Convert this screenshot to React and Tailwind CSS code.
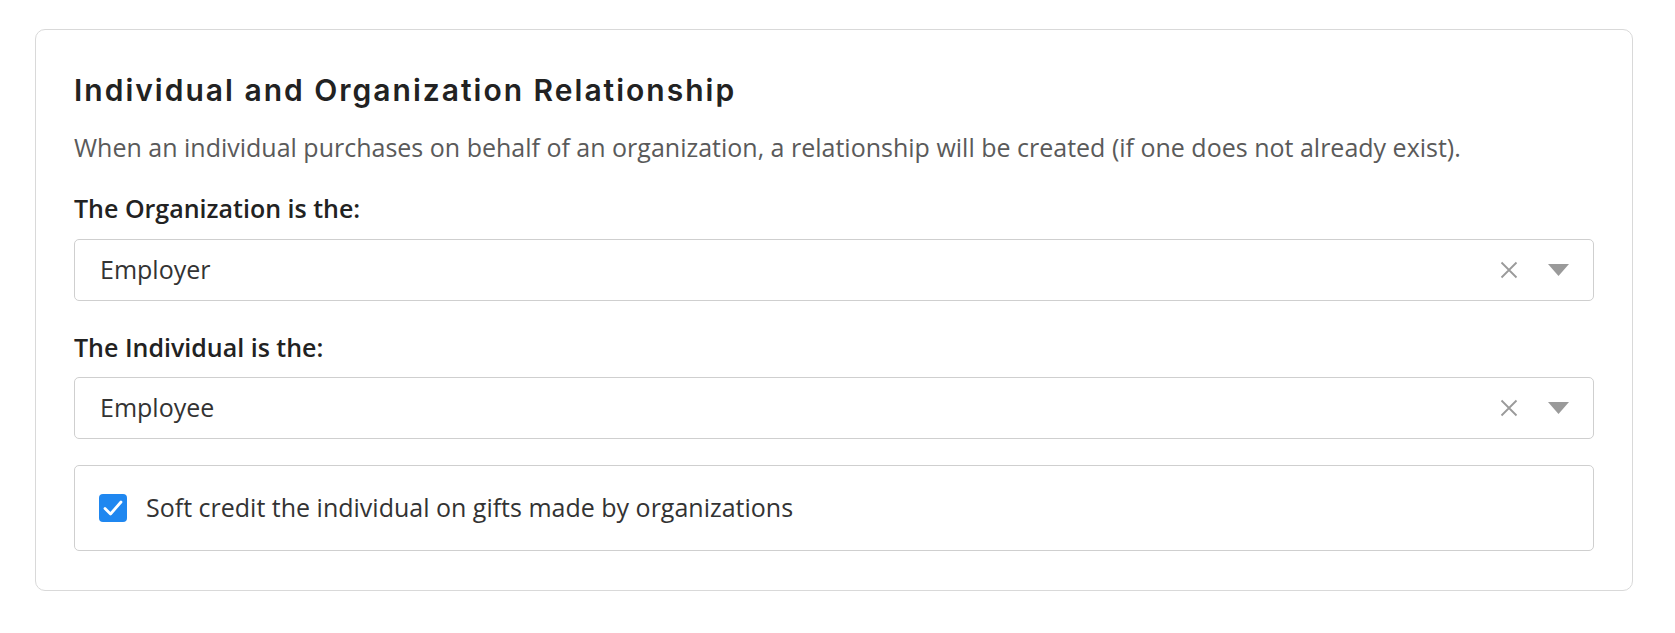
const body = { fontFamily: '"Open Sans", "Noto Sans", sans-serif' };
const heading = { fontFamily: 'Inter, "Noto Sans", sans-serif' };

function ClearIcon() {
  return (
    <svg width="18" height="18" viewBox="0 0 18 18" className="shrink-0">
      <path d="M1.5 1.5 L16.5 16.5 M16.5 1.5 L1.5 16.5" stroke="#9a9a9a" strokeWidth="1.8" fill="none" />
    </svg>
  );
}

function CaretIcon() {
  return (
    <svg width="21" height="12" viewBox="0 0 21 12" className="shrink-0">
      <polygon points="0,0 21,0 10.5,12" fill="#9a9a9a" />
    </svg>
  );
}

function SelectBox({ value }) {
  return (
    <div className="flex h-[62px] items-center rounded-[5px] border border-[#cfcfcf] bg-white pl-[25px] pr-[24px]">
      <span className="flex-1 text-[25px] text-[#333]">{value}</span>
      <div className="flex items-center gap-[30px]">
        <ClearIcon />
        <CaretIcon />
      </div>
    </div>
  );
}

export default function App() {
  return (
    <div className="min-h-screen bg-white pt-[29px]" style={body}>
      <div className="ml-[35px] w-[1598px] rounded-[10px] border border-[#d9d9d9] bg-white px-[38px] pb-[39px] pt-[43px]">
        <h2 className="text-[30px] font-semibold leading-[34px] tracking-[2px] text-[#222]" style={heading}>
          Individual and Organization Relationship
        </h2>
        <p className="mt-[25px] text-[25px] leading-[30px] text-[#5a5a5a]">
          When an individual purchases on behalf of an organization, a relationship will be created (if one does not already exist).
        </p>

        <div className="mt-[31px] text-[25px] font-semibold leading-[30px] text-[#222]">The Organization is the:</div>
        <div className="mt-[16px]">
          <SelectBox value="Employer" />
        </div>

        <div className="mt-[31px] text-[25px] font-semibold leading-[30px] text-[#222]">The Individual is the:</div>
        <div className="mt-[15px]">
          <SelectBox value="Employee" />
        </div>

        <div className="mt-[26px] flex h-[86px] items-center gap-[19px] rounded-[5px] border border-[#cfcfcf] pl-[24px]">
          <span className="flex h-[28px] w-[28px] items-center justify-center rounded-[4px] bg-[#1f87f0]">
            <svg width="22" height="18" viewBox="0 0 22 18">
              <path d="M3 9.5 L8.5 15 L19 3" stroke="white" strokeWidth="2.8" fill="none" strokeLinecap="round" strokeLinejoin="round" />
            </svg>
          </span>
          <span className="text-[25px] text-[#333]">Soft credit the individual on gifts made by organizations</span>
        </div>
      </div>
    </div>
  );
}
